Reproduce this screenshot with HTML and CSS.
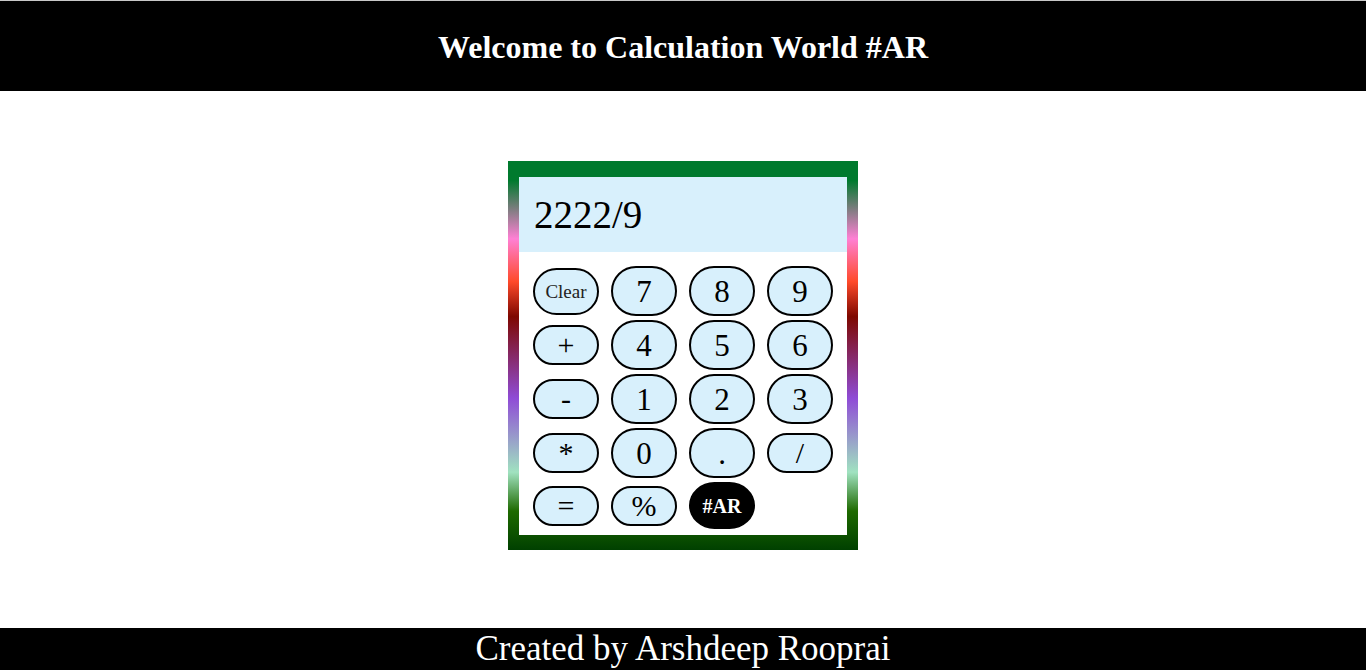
FILE: index.html
```html
<!DOCTYPE html>
<html lang="en">
<head>
<meta charset="utf-8">
<title>Calculator</title>
<link rel="stylesheet" href="styles.css">
</head>
<body>
<header class="topbar"><h1 class="title">Welcome to Calculation World #AR</h1></header>
<main class="stage">
  <div class="calc">
    <div class="panel">
      <div class="display">2222/9</div>
      <div class="keys">
        <button class="btn clear">Clear</button>
        <button class="btn num">7</button>
        <button class="btn num">8</button>
        <button class="btn num">9</button>
        <button class="btn op">+</button>
        <button class="btn num">4</button>
        <button class="btn num">5</button>
        <button class="btn num">6</button>
        <button class="btn op">-</button>
        <button class="btn num">1</button>
        <button class="btn num">2</button>
        <button class="btn num">3</button>
        <button class="btn op">*</button>
        <button class="btn num">0</button>
        <button class="btn num">.</button>
        <button class="btn op">/</button>
        <button class="btn op">=</button>
        <button class="btn op">%</button>
        <button class="btn ar">#AR</button>
      </div>
    </div>
  </div>
</main>
<footer class="bottombar">Created by Arshdeep Rooprai</footer>
</body>
</html>
```
FILE: styles.css
```css
html, body {
  margin: 0;
  padding: 0;
}
body {
  min-height: 100vh;
  display: flex;
  flex-direction: column;
  font-family: "Liberation Serif", "Times New Roman", serif;
  background: #ffffff;
}
.topbar {
  border-top: 1px solid #c8c8c8;
  background: #000000;
  height: 90px;
  display: flex;
  align-items: center;
  justify-content: center;
}
.title {
  margin: 0;
  color: #ffffff;
  font-size: 32px;
  font-weight: bold;
  line-height: 1;
  padding-top: 2px;
}
.stage {
  flex: 1;
  display: flex;
  justify-content: center;
  align-items: flex-start;
  padding-top: 70px;
}
.calc {
  width: 328px;
  padding: 16px 11px 15px;
  background: linear-gradient(to bottom,
    #007a2e 0%,
    #007a2e 5%,
    #ff80d4 20%,
    #ff4a2a 31%,
    #7e0800 40%,
    #8f4cd6 61%,
    #a0e2c0 80%,
    #1e6a00 90%,
    #004000 100%);
}
.panel {
  background: #ffffff;
}
.display {
  height: 75px;
  background: #d8f0fc;
  font-size: 39px;
  line-height: 75px;
  padding-left: 15px;
  color: #000000;
}
.keys {
  display: grid;
  grid-template-columns: repeat(4, 66px);
  column-gap: 12px;
  row-gap: 4px;
  align-items: center;
  padding: 14px 14px 6px;
}
.btn {
  box-sizing: border-box;
  width: 66px;
  margin: 0;
  padding: 0;
  border: 2px solid #000000;
  background: #d8f0fc;
  color: #000000;
  font-family: "Liberation Serif", "Times New Roman", serif;
  line-height: 1;
}
.num {
  height: 50px;
  font-size: 31px;
  border-radius: 25px;
}
.op {
  height: 40px;
  font-size: 30px;
  border-radius: 20px;
}
.clear {
  height: 47px;
  font-size: 19px;
  color: #222222;
  border-radius: 24px;
}
.ar {
  height: 47px;
  font-size: 20px;
  font-weight: bold;
  background: #000000;
  color: #ffffff;
  border-color: #000000;
  border-radius: 26px / 24px;
}
.bottombar {
  height: 42px;
  background: #000000;
  color: #ffffff;
  font-size: 35px;
  display: flex;
  align-items: center;
  justify-content: center;
  line-height: 1;
  padding-bottom: 1px;
  box-sizing: border-box;
}
```
